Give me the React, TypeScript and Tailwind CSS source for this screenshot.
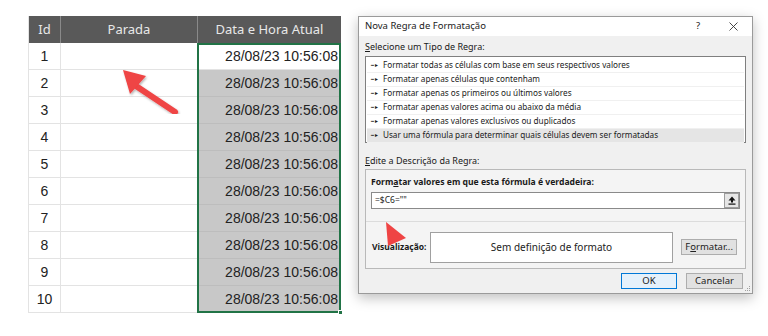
import React from "react";

const rows = [1, 2, 3, 4, 5, 6, 7, 8, 9, 10];
const rules = [
  "Formatar todas as células com base em seus respectivos valores",
  "Formatar apenas células que contenham",
  "Formatar apenas os primeiros ou últimos valores",
  "Formatar apenas valores acima ou abaixo da média",
  "Formatar apenas valores exclusivos ou duplicados",
  "Usar uma fórmula para determinar quais células devem ser formatadas",
];

const dlgFont = { fontFamily: '"Noto Sans", "Liberation Sans", sans-serif' };

const Sheet: React.FC = () => {
  return (
    <div className="relative mt-4 ml-7">
      <div className="grid grid-cols-[32px_137px_143px] border-l border-[#e3e3e3]">
        {/* header */}
        <div className="h-[27px] bg-[#595959] text-[#e8e8e8] text-[13px] flex items-center justify-center border-r border-[#8a8a8a]" style={dlgFont}>
          Id
        </div>
        <div className="h-[27px] bg-[#595959] text-[#e8e8e8] text-[13px] flex items-center justify-center border-r border-[#8a8a8a]" style={dlgFont}>
          Parada
        </div>
        <div className="h-[27px] bg-[#595959] text-[#e8e8e8] text-[13px] flex items-center justify-center" style={dlgFont}>
          Data e Hora Atual
        </div>
        {rows.map((r) => (
          <React.Fragment key={r}>
            <div className="h-[27px] flex items-center justify-center border-r border-b border-[#e3e3e3] text-[14px] text-[#222] font-['Liberation_Sans',sans-serif]">
              {r}
            </div>
            <div className="h-[27px] border-r border-b border-[#e3e3e3]" />
            <div
              className={`h-[27px] flex items-center justify-end pr-[3px] border-b text-[14px] text-[#222] font-['Liberation_Sans',sans-serif] ${
                r === 1 ? "bg-white border-[#e3e3e3]" : "bg-[#c8c8c8] border-[#bdbdbd]"
              }`}
            >
              28/08/23 10:56:08
            </div>
          </React.Fragment>
        ))}
      </div>

      {/* selection */}
      <div className="absolute left-[169px] top-[27px] w-[144px] h-[270px] border-2 border-[#217346] pointer-events-none">
        <div className="absolute -right-[4px] -bottom-[4px] w-[5px] h-[5px] bg-[#217346] border border-white" />
      </div>

      {/* red arrow */}
      <svg className="absolute left-[88px] top-[50px]" width="70" height="48" viewBox="0 0 70 48">
        <defs>
          <filter id="sh" x="-20%" y="-20%" width="140%" height="140%">
            <feDropShadow dx="1" dy="1.5" stdDeviation="1" floodColor="#000" floodOpacity="0.3" />
          </filter>
        </defs>
        <g filter="url(#sh)">
          <line x1="59" y1="46" x2="20" y2="20" stroke="#ef4444" strokeWidth="6" strokeLinecap="round" />
          <polygon points="7,4 30,10 14,28" fill="#ef4444" />
        </g>
      </svg>
    </div>
  );
};

const Btn: React.FC<{ children: React.ReactNode; className?: string }> = ({ children, className }) => (
  <div className={`h-[16px] flex items-center justify-center bg-[#e1e1e1] border border-[#adadad] text-[9.5px] text-[#222] ${className ?? ""}`}>
    {children}
  </div>
);

const Dialog: React.FC = () => {
  return (
    <div
      className="relative mt-4 ml-[17px] w-[395px] h-[278px] border border-[#9a9a9a] bg-[#f0f0f0] shadow-[0_4px_12px_rgba(0,0,0,0.25)] flex flex-col text-[#1a1a1a]"
      style={dlgFont}
    >
      {/* title bar */}
      <div className="h-[19px] bg-white flex items-center pl-[6px] pr-[14px] text-[9.5px]">
        <span className="flex-1">Nova Regra de Formatação</span>
        <span className="w-[10px] text-center mr-[26px]">?</span>
        <svg width="9" height="9" viewBox="0 0 9 9">
          <path d="M0.5 0.5 L8.5 8.5 M8.5 0.5 L0.5 8.5" stroke="#333" strokeWidth="0.9" />
        </svg>
      </div>

      <div className="flex flex-col px-[6px]">
        <div className="h-[18px] flex items-end pb-[1px] text-[9px]">
          <span>
            <span className="underline">S</span>elecione um Tipo de Regra:
          </span>
        </div>
        <div className="mt-[2px] h-[87px] bg-white border border-[#7f7f7f] px-[1px] pt-[2px]">
          {rules.map((t, i) => (
            <div
              key={t}
              className={`h-[14px] flex items-center pl-[4px] text-[8.2px] border-b border-[#f0f0f0] ${
                i === 5 ? "bg-[#e5e5e5]" : ""
              }`}
            >
              <span className="text-[5px] mr-[4px]">━►</span>
              {t}
            </div>
          ))}
        </div>

        <div className="mt-[12px] h-[12px] flex items-center text-[9px]">
          <span>
            <span className="underline">E</span>dite a Descrição da Regra:
          </span>
        </div>
        <div className="mt-[2px] h-[100px] border border-[#b9b9b9] bg-[#f4f4f4] flex flex-col">
          <div className="px-[5px] pt-[6px] text-[8.6px] font-bold">
            Form<span className="underline">a</span>tar valores em que esta fórmula é verdadeira:
          </div>
          <div className="mx-[5px] mt-[3px] h-[17px] bg-white border border-[#8a8a8a] flex items-center">
            <span className="flex-1 pl-[3px] text-[8.5px]">=$C6=""</span>
            <div className="w-[15px] h-[15px] bg-[#e6e6e6] border border-[#9d9d9d] flex items-center justify-center">
              <svg width="8" height="9" viewBox="0 0 8 9">
                <path d="M4 0.5 L7.5 4.5 H5 V6.5 H3 V4.5 H0.5 Z" fill="#111" />
                <rect x="0.5" y="7.5" width="7" height="1.2" fill="#111" />
              </svg>
            </div>
          </div>
          <div className="mt-[12px] border-t border-[#dcdcdc]" />
          <div className="flex items-center pl-[6px] pr-[8px] mt-[10px]">
            <span className="w-[58px] text-[8.5px] font-bold">Visualização:</span>
            <div className="w-[245px] h-[31px] bg-white border border-[#a0a0a0] flex items-center justify-center text-[10px] text-[#222]">
              Sem definição de formato
            </div>
            <Btn className="ml-[8px] w-[56px]">
              F<span className="underline">o</span>rmatar...
            </Btn>
          </div>
        </div>

        <div className="flex justify-end mt-[4px] pr-[3px] gap-[9px]">
          <div className="w-[56px] h-[16px] flex items-center justify-center bg-[#e5f1fb] border border-[#0078d7] text-[9.5px] text-[#222]">
            OK
          </div>
          <Btn className="w-[57px]">Cancelar</Btn>
        </div>
      </div>

      {/* resize grip */}
      <svg className="absolute right-[1px] bottom-[1px]" width="8" height="8" viewBox="0 0 8 8">
        <rect x="6" y="2" width="1" height="1" fill="#a0a0a0" />
        <rect x="4" y="4" width="1" height="1" fill="#a0a0a0" />
        <rect x="6" y="4" width="1" height="1" fill="#a0a0a0" />
        <rect x="2" y="6" width="1" height="1" fill="#a0a0a0" />
        <rect x="4" y="6" width="1" height="1" fill="#a0a0a0" />
        <rect x="6" y="6" width="1" height="1" fill="#a0a0a0" />
      </svg>

      {/* red pointer triangle */}
      <svg className="absolute left-[26px] top-[204px]" width="22" height="26" viewBox="0 0 22 26">
        <polygon points="1,1 21,17 3,25" fill="#ef4444" />
      </svg>
    </div>
  );
};

export default function App() {
  return (
    <div className="w-[768px] h-[336px] bg-white flex items-start overflow-hidden">
      <Sheet />
      <Dialog />
    </div>
  );
}
